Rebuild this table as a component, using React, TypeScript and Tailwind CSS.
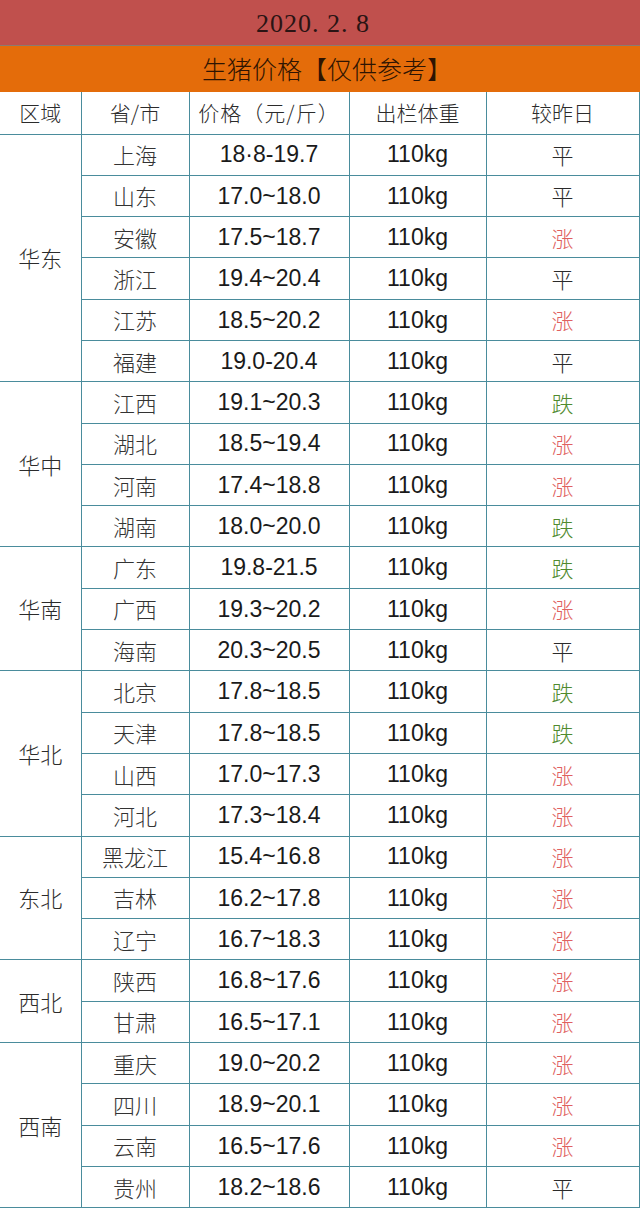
import React from "react";

type Row = { prov: string; price: string; trend: "平" | "涨" | "跌" };
type Group = { region: string; rows: Row[] };

const groups: Group[] = [
    {
        region: "华东",
        rows: [
            { prov: "上海", price: "18·8-19.7", trend: "平" },
            { prov: "山东", price: "17.0~18.0", trend: "平" },
            { prov: "安徽", price: "17.5~18.7", trend: "涨" },
            { prov: "浙江", price: "19.4~20.4", trend: "平" },
            { prov: "江苏", price: "18.5~20.2", trend: "涨" },
            { prov: "福建", price: "19.0-20.4", trend: "平" },
        ],
    },
    {
        region: "华中",
        rows: [
            { prov: "江西", price: "19.1~20.3", trend: "跌" },
            { prov: "湖北", price: "18.5~19.4", trend: "涨" },
            { prov: "河南", price: "17.4~18.8", trend: "涨" },
            { prov: "湖南", price: "18.0~20.0", trend: "跌" },
        ],
    },
    {
        region: "华南",
        rows: [
            { prov: "广东", price: "19.8-21.5", trend: "跌" },
            { prov: "广西", price: "19.3~20.2", trend: "涨" },
            { prov: "海南", price: "20.3~20.5", trend: "平" },
        ],
    },
    {
        region: "华北",
        rows: [
            { prov: "北京", price: "17.8~18.5", trend: "跌" },
            { prov: "天津", price: "17.8~18.5", trend: "跌" },
            { prov: "山西", price: "17.0~17.3", trend: "涨" },
            { prov: "河北", price: "17.3~18.4", trend: "涨" },
        ],
    },
    {
        region: "东北",
        rows: [
            { prov: "黑龙江", price: "15.4~16.8", trend: "涨" },
            { prov: "吉林", price: "16.2~17.8", trend: "涨" },
            { prov: "辽宁", price: "16.7~18.3", trend: "涨" },
        ],
    },
    {
        region: "西北",
        rows: [
            { prov: "陕西", price: "16.8~17.6", trend: "涨" },
            { prov: "甘肃", price: "16.5~17.1", trend: "涨" },
        ],
    },
    {
        region: "西南",
        rows: [
            { prov: "重庆", price: "19.0~20.2", trend: "涨" },
            { prov: "四川", price: "18.9~20.1", trend: "涨" },
            { prov: "云南", price: "16.5~17.6", trend: "涨" },
            { prov: "贵州", price: "18.2~18.6", trend: "平" },
        ],
    },
];

const cjk = "font-['Noto_Sans_CJK_SC',sans-serif] font-light";
const num = "font-['Liberation_Sans',Arial,sans-serif]";
const cell = "border-r border-b border-[#4a8c9c] text-center align-middle p-0";

const trendColor = {
    平: "text-[#2b2b2b]",
    涨: "text-[#e06060]",
    跌: "text-[#4f8a2e]",
};

export default function App() {
    return (
        <div className="w-[640px] h-[1211px] overflow-hidden bg-white">
            <div className="flex h-[46px] items-center justify-center whitespace-pre border-b border-[#8a7a70] bg-[#c0504d] pr-[14px] pt-[2px] font-['Liberation_Serif',serif] text-[26px] tracking-[1px] text-[#2a1414]">
                2020. 2. 8
            </div>
            <div className={`flex h-[46px] items-center justify-center bg-[#e46c0a] pl-[14px] text-[25px] text-[#2e1402] ${cjk}`}>
                生猪价格【仅供参考】
            </div>

            <table className="w-[639px] table-fixed border-collapse">
                <colgroup>
                    <col className="w-[81px]" />
                    <col className="w-[108px]" />
                    <col className="w-[160px]" />
                    <col className="w-[137px]" />
                    <col className="w-[153px]" />
                </colgroup>
                <thead>
                    <tr className={`h-[42px] text-[21px] text-[#2b2b2b] ${cjk}`}>
                        <th className={`${cell} font-light`}>区域</th>
                        <th className={`${cell} font-light`}>省/市</th>
                        <th className={`${cell} font-light tracking-[1px]`}>价格（元/斤）</th>
                        <th className={`${cell} font-light`}>出栏体重</th>
                        <th className={`${cell} font-light`}>较昨日</th>
                    </tr>
                </thead>
                <tbody>
                    {groups.map((g) =>
                        g.rows.map((r, i) => (
                            <tr key={r.prov} className="h-[41.3px]">
                                {i === 0 && (
                                    <td rowSpan={g.rows.length} className={`${cell} ${cjk} text-[22px] text-[#2b2b2b]`}>
                                        {g.region}
                                    </td>
                                )}
                                <td className={`${cell} ${cjk} text-[22px] text-[#333]`}>{r.prov}</td>
                                <td className={`${cell} ${num} text-[23px] text-[#1a1a1a]`}>{r.price}</td>
                                <td className={`${cell} ${num} text-[23px] text-[#1a1a1a]`}>110kg</td>
                                <td className={`${cell} ${cjk} text-[22px] ${trendColor[r.trend]}`}>{r.trend}</td>
                            </tr>
                        ))
                    )}
                </tbody>
            </table>
        </div>
    );
}
